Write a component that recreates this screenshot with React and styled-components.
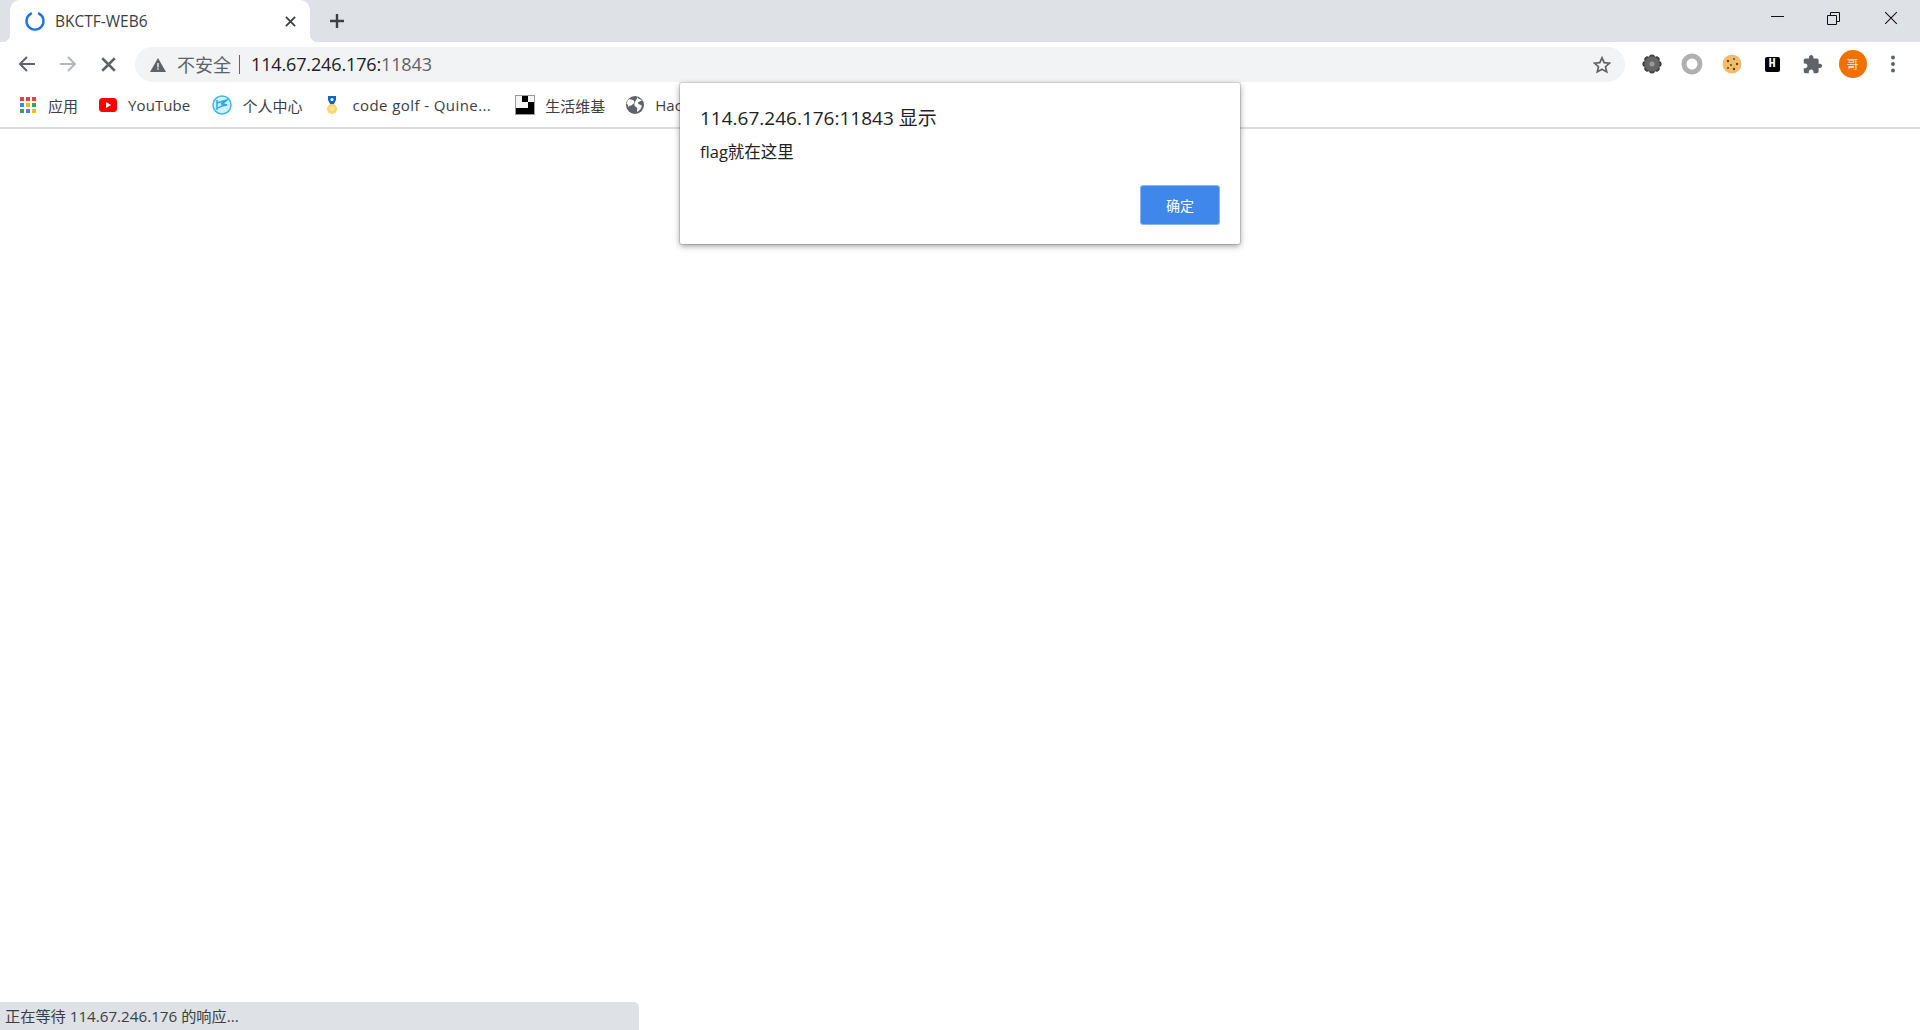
import React from "react";
import styled, { createGlobalStyle } from "styled-components";

const sans = `"Open Sans", "Noto Sans CJK SC", sans-serif`;

const Global = createGlobalStyle`
  html, body { margin: 0; height: 100%; background: #fff; overflow: hidden; }
  body { font-family: ${sans}; color: #202124; }
`;

const Page = styled.div`
  position: relative;
  height: 1030px;
  display: flex;
  flex-direction: column;
`;

const TabStrip = styled.div`
  height: 42px;
  background: #dee1e6;
  display: flex;
  padding-left: 10px;
`;

const Tab = styled.div`
  position: relative;
  width: 300px;
  background: #fff;
  border-radius: 10px 10px 0 0;
  display: flex;
  align-items: center;
  padding: 0 14px 0 14px;
  box-sizing: border-box;
  &::before, &::after {
    content: "";
    position: absolute;
    bottom: 0;
    width: 8px;
    height: 8px;
  }
  &::before { left: -8px; background: radial-gradient(circle at 0 0, #dee1e6 8px, #fff 8.5px); }
  &::after { right: -8px; background: radial-gradient(circle at 100% 0, #dee1e6 8px, #fff 8.5px); }
`;

const TabTitle = styled.span`
  flex: 1;
  margin-left: 9px;
  font-size: 15.5px;
  color: #3c4043;
`;

const NewTab = styled.div`
  width: 34px;
  margin-left: 10px;
  display: flex;
  align-items: center;
  justify-content: center;
`;

const WindowControls = styled.div`
  margin-left: auto;
  display: flex;
  align-items: flex-start;
`;

const WindowButton = styled.div`
  width: ${(p) => p.$w || 57}px;
  height: 36px;
  display: flex;
  align-items: center;
  justify-content: center;
`;

const Toolbar = styled.div`
  height: 44px;
  display: flex;
  align-items: center;
  padding: 0 7px 0 6px;
`;

const Slot = styled.div`
  width: ${(p) => p.$w || 40}px;
  height: 40px;
  flex: none;
  display: flex;
  align-items: center;
  justify-content: center;
`;

const Omnibox = styled.div`
  flex: 1;
  height: 35px;
  margin: 1px 7px 0 7px;
  border-radius: 18px;
  background: #f1f3f4;
  display: flex;
  align-items: center;
  padding: 0 14px 0 15px;
`;

const NotSecure = styled.span`
  margin-left: 11px;
  font-size: 18px;
  color: #5f6368;
  position: relative;
  top: -1px;
`;

const Divider = styled.span`
  width: 1px;
  height: 19px;
  margin: 0 11px 0 8px;
  background: #5f6368;
`;

const Url = styled.span`
  font-size: 18px;
  color: #202124;
  flex: 1;
  letter-spacing: -0.14px;
  position: relative;
  top: -1px;
`;

const UrlPort = styled.span`
  color: #5f6368;
`;

const Avatar = styled.div`
  width: 28px;
  height: 28px;
  border-radius: 50%;
  background: #f07000;
  color: #ffe3cc;
  font-size: 12px;
  display: flex;
  align-items: center;
  justify-content: center;
`;

const HBadge = styled.div`
  width: 15px;
  height: 15px;
  border-radius: 2px;
  background: #000;
  color: #fff;
  font: 700 12px/15px "Liberation Mono", monospace;
  text-align: center;
`;

const Bookmarks = styled.div`
  height: 43px;
  box-sizing: border-box;
  border-bottom: 2px solid #dadce0;
  display: flex;
  align-items: center;
  padding: 0 0 3px 20px;
  font-size: 15px;
  color: #3c4043;
`;

const Bookmark = styled.div`
  display: flex;
  align-items: center;
  margin-right: ${(p) => p.$gap}px;
  white-space: nowrap;
`;

const BookmarkLabel = styled.span`
  margin-left: ${(p) => p.$gap}px;
  font-size: 15px;
  letter-spacing: ${(p) => p.$track || 0}px;
`;

const Dialog = styled.div`
  position: absolute;
  left: 680px;
  top: 83px;
  width: 560px;
  height: 161px;
  box-sizing: border-box;
  padding: 22px 20px 19px;
  background: #fff;
  border-radius: 2px;
  box-shadow: 0 0 0 1px rgba(0, 0, 0, 0.12), 0 2px 6px rgba(0, 0, 0, 0.4);
  display: flex;
  flex-direction: column;
`;

const DialogTitle = styled.div`
  font-size: 19px;
  line-height: 26px;
  color: #202124;
`;

const DialogBody = styled.div`
  margin-top: 10px;
  font-size: 16.5px;
  line-height: 22px;
  color: #202124;
`;

const OkButton = styled.button`
  margin-top: auto;
  align-self: flex-end;
  width: 80px;
  height: 40px;
  border: 1px solid #8ab4f0;
  border-radius: 3px;
  background: #3f87ea;
  color: #fff;
  font: 14px ${sans};
`;

const StatusBar = styled.div`
  position: absolute;
  left: 0;
  bottom: 0;
  width: 639px;
  height: 28px;
  padding-left: 5px;
  box-sizing: border-box;
  background: #dee1e6;
  border-top-right-radius: 5px;
  font-size: 15.2px;
  line-height: 29px;
  color: #3c4043;
`;

const Spinner = () => (
  <svg width="22" height="22" viewBox="0 0 22 22" fill="none">
    <path d="M7 3.6A8.5 8.5 0 1 0 15 3.6" stroke="#1a73e8" strokeWidth="2.4" strokeLinecap="round" />
  </svg>
);

const Cross = ({ size = 12, color = "#3c4043", width = 2 }) => (
  <svg width={size} height={size} viewBox="0 0 12 12" stroke={color} strokeWidth={width}>
    <path d="M1 1l10 10M11 1L1 11" />
  </svg>
);

const Plus = () => (
  <svg width="16" height="16" viewBox="0 0 16 16" stroke="#3c4043" strokeWidth="2.4">
    <path d="M8 1v14M1 8h14" />
  </svg>
);

const Arrow = ({ color, flip }) => (
  <svg width="18" height="16" viewBox="0 0 18 16" fill="none" stroke={color} strokeWidth="2" style={flip ? { transform: "scaleX(-1)" } : undefined}>
    <path d="M17 8H2M9 1L2 8l7 7" />
  </svg>
);

const Warning = () => (
  <svg width="16" height="14" viewBox="0 0 16 14">
    <path d="M8 0l8 14H0z" fill="#5f6368" />
    <path d="M7.3 5h1.4v4.4H7.3zM7.3 10.3h1.4v1.4H7.3z" fill="#f1f3f4" />
  </svg>
);

const Star = () => (
  <svg width="18" height="18" viewBox="0 0 18 18" fill="none" stroke="#5f6368" strokeWidth="1.7" strokeLinejoin="miter">
    <path d="M9 1.8l2.2 4.9 5.3.5-4 3.5 1.2 5.2L9 13.200l-4.700 2.700 1.200-5.200-4-3.500 5.300-.5z" />
  </svg>
);

const FlowerExt = () => (
  <svg width="20" height="20" viewBox="0 0 20 20">
    {[0, 45, 90, 135, 180, 225, 270, 315].map((a) => (
      <circle key={a} cx="10" cy="3.400" r="3" fill="#3f3f3f" transform={`rotate(${a} 10 10)`} />
    ))}
    <circle cx="10" cy="10" r="7.500" fill="#666" />
    <circle cx="10" cy="10" r="2.500" fill="#999" />
  </svg>
);

const RingExt = () => (
  <svg width="22" height="22" viewBox="0 0 22 22" fill="none">
    <circle cx="11" cy="11" r="8" stroke="#b0b0b0" strokeWidth="5" />
  </svg>
);

const CookieExt = () => (
  <svg width="20" height="20" viewBox="0 0 20 20">
    <circle cx="10" cy="10" r="9.500" fill="#f0bd6c" />
    <circle cx="6" cy="7" r="1.200" fill="#6b3f1d" />
    <circle cx="12" cy="5" r="1" fill="#6b3f1d" />
    <circle cx="15" cy="10" r="1.200" fill="#6b3f1d" />
    <circle cx="9" cy="11" r="1" fill="#6b3f1d" />
    <circle cx="6" cy="14" r="1" fill="#6b3f1d" />
    <circle cx="12" cy="15" r="1.200" fill="#6b3f1d" />
  </svg>
);

const Puzzle = () => (
  <svg width="21" height="21" viewBox="0 0 24 24" fill="#5f6368">
    <path d="M20.500 11H19V7c0-1.100-.9-2-2-2h-4V3.500C13 2.120 11.880 1 10.500 1S8 2.120 8 3.500V5H4c-1.100 0-1.990.9-1.990 2v3.800H3.500c1.490 0 2.700 1.210 2.700 2.700s-1.210 2.700-2.700 2.700H2V20c0 1.100.9 2 2 2h3.800v-1.500c0-1.490 1.210-2.700 2.700-2.700 1.490 0 2.700 1.210 2.700 2.700V22H17c1.100 0 2-.9 2-2v-4h1.500c1.380 0 2.500-1.120 2.500-2.500S21.880 11 20.500 11z" />
  </svg>
);

const Dots = () => (
  <svg width="4" height="18" viewBox="0 0 4 18" fill="#5f6368">
    <circle cx="2" cy="2.500" r="2" />
    <circle cx="2" cy="9" r="2" />
    <circle cx="2" cy="15.500" r="2" />
  </svg>
);

const AppsIcon = () => {
  const colors = ["#ea4335", "#ea4335", "#ea4335", "#4285f4", "#fbbc05", "#34a853", "#34a853", "#4285f4", "#fbbc05"];
  return (
    <svg width="16" height="16" viewBox="0 0 16 16">
      {colors.map((c, i) => (
        <rect key={i} x={(i % 3) * 6} y={Math.floor(i / 3) * 6} width="4" height="4" fill={c} />
      ))}
    </svg>
  );
};

const YouTubeIcon = () => (
  <svg width="18" height="14" viewBox="0 0 18 14">
    <rect width="18" height="14" rx="3.500" fill="#f00" />
    <path d="M7 4l5 3-5 3z" fill="#fff" />
  </svg>
);

const ProfileIcon = () => (
  <svg width="20" height="20" viewBox="0 0 20 20" fill="none">
    <circle cx="10" cy="10" r="9" fill="#d4f1fb" stroke="#3db8e6" strokeWidth="1.500" />
    <path d="M5 5v10M5 8c3-1 6-2 10-3-2 2-4 3-6 4 2 0 4 0 6 1-3 0-6 1-9 3" stroke="#29a8dc" strokeWidth="1.500" />
  </svg>
);

const MedalIcon = () => (
  <svg width="14" height="20" viewBox="0 0 14 20">
    <path d="M3 1h8v4l-2.500 5h-3L3 5z" fill="#1565c0" />
    <circle cx="7" cy="4.500" r="1.500" fill="#fff" />
    <circle cx="7" cy="14" r="5" fill="#fdd663" />
    <circle cx="7" cy="14" r="2.500" fill="#fbe59a" />
  </svg>
);

const GliderIcon = () => {
  const on = [1, 5, 6, 7, 8];
  return (
    <svg width="20" height="20" viewBox="0 0 20 20">
      <rect x="0.500" y="0.500" width="19" height="19" fill="#fff" stroke="#999" strokeWidth="1" />
      {[...Array(9).keys()].map((i) => (
        <rect key={i} x={1 + (i % 3) * 6} y={1 + Math.floor(i / 3) * 6} width="6" height="6" fill={on.includes(i) ? "#000" : "#f4f4f4"} />
      ))}
    </svg>
  );
};

const GlobeIcon = () => (
  <svg width="18" height="18" viewBox="0 0 18 18">
    <circle cx="9" cy="9" r="9" fill="#5f6368" />
    <path d="M3 3c2 1 4 0 5 2s-1 3-2 4-3 0-3 2-1-3-2-3 1-4 2-5zM11 1c1 2 3 2 5 3-1 2-4 1-4 3s3 1 4 3c-1 3-3 5-5 6 0-3 1-4-1-5s-2-3-1-5 2-2 2-5z" fill="#fff" />
  </svg>
);

export default function App() {
  return (
    <Page>
      <Global />
      <TabStrip>
        <Tab>
          <Spinner />
          <TabTitle>BKCTF-WEB6</TabTitle>
          <Cross size={11} />
        </Tab>
        <NewTab><Plus /></NewTab>
        <WindowControls>
          <WindowButton $w={56}>
            <svg width="13" height="13" viewBox="0 0 13 13" stroke="#111" strokeWidth="1"><path d="M0 4.500h13" /></svg>
          </WindowButton>
          <WindowButton>
            <svg width="13" height="13" viewBox="0 0 13 13" fill="none" stroke="#111" strokeWidth="1"><path d="M.5 3.500h9v9h-9zM3.500 3.500v-3h9v9h-3" /></svg>
          </WindowButton>
          <WindowButton $w={58}>
            <Cross size={14} color="#111" width={0.9} />
          </WindowButton>
        </WindowControls>
      </TabStrip>

      <Toolbar>
        <Slot $w={41}><Arrow color="#5f6368" /></Slot>
        <Slot $w={41}><Arrow color="#b4b7bb" flip /></Slot>
        <Slot><Cross size={15} color="#5f6368" /></Slot>
        <Omnibox>
          <Warning />
          <NotSecure>不安全</NotSecure>
          <Divider />
          <Url>114.67.246.176:<UrlPort>11843</UrlPort></Url>
          <Star />
        </Omnibox>
        <Slot><FlowerExt /></Slot>
        <Slot><RingExt /></Slot>
        <Slot><CookieExt /></Slot>
        <Slot><HBadge>H</HBadge></Slot>
        <Slot><Puzzle /></Slot>
        <Slot $w={41}><Avatar>哥</Avatar></Slot>
        <Slot><Dots /></Slot>
      </Toolbar>

      <Bookmarks>
        <Bookmark $gap={21}><AppsIcon /><BookmarkLabel $gap={12}>应用</BookmarkLabel></Bookmark>
        <Bookmark $gap={22}><YouTubeIcon /><BookmarkLabel $gap={11} $track={0.1}>YouTube</BookmarkLabel></Bookmark>
        <Bookmark $gap={23}><ProfileIcon /><BookmarkLabel $gap={10}>个人中心</BookmarkLabel></Bookmark>
        <Bookmark $gap={24}><MedalIcon /><BookmarkLabel $gap={13} $track={0.42}>code golf - Quine...</BookmarkLabel></Bookmark>
        <Bookmark $gap={21}><GliderIcon /><BookmarkLabel $gap={10}>生活维基</BookmarkLabel></Bookmark>
        <Bookmark $gap={0}><GlobeIcon /><BookmarkLabel $gap={11}>Hacker</BookmarkLabel></Bookmark>
      </Bookmarks>

      <Dialog role="alertdialog">
        <DialogTitle>114.67.246.176:11843 显示</DialogTitle>
        <DialogBody>flag就在这里</DialogBody>
        <OkButton>确定</OkButton>
      </Dialog>

      <StatusBar>正在等待 114.67.246.176 的响应...</StatusBar>
    </Page>
  );
}
